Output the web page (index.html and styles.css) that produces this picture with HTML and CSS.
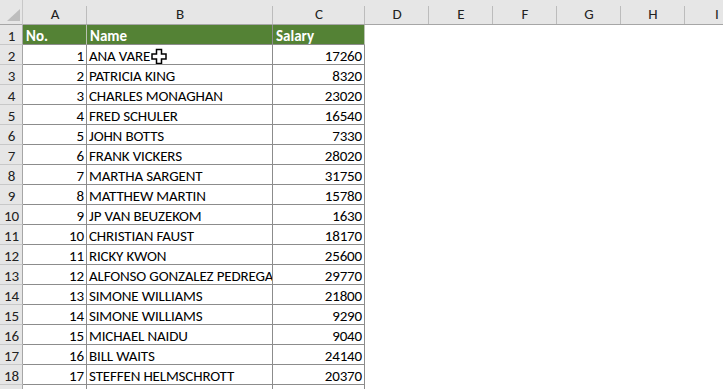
FILE: index.html
```html
<!DOCTYPE html>
<html>
<head>
<meta charset="utf-8">
<link rel="stylesheet" href="styles.css">
</head>
<body>
<div class="sheet">
  <div class="corner"><span class="tri"></span></div>
  <div class="colhead">A</div><div class="colhead">B</div><div class="colhead">C</div><div class="colhead">D</div><div class="colhead">E</div><div class="colhead">F</div><div class="colhead">G</div><div class="colhead">H</div><div class="colhead">I</div>

  <div class="rowhead">1</div><div class="th">No.</div><div class="th">Name</div><div class="th">Salary</div><div class="blank"></div><div class="blank"></div><div class="blank"></div><div class="blank"></div><div class="blank"></div><div class="blank"></div>

  <div class="rowhead">2</div><div class="td num">1</div><div class="td name">ANA VARE<svg class="cursor" width="17" height="17" viewBox="0 0 17 17"><path d="M5.5 1.5h5v4.5h4.5v5h-4.5v4.5h-5v-4.5h-4.5v-5h4.5z" fill="#fff" stroke="#000" stroke-width="1.5"/></svg></div><div class="td num">17260</div><div class="blank"></div><div class="blank"></div><div class="blank"></div><div class="blank"></div><div class="blank"></div><div class="blank"></div>
  <div class="rowhead">3</div><div class="td num">2</div><div class="td name">PATRICIA KING</div><div class="td num">8320</div><div class="blank"></div><div class="blank"></div><div class="blank"></div><div class="blank"></div><div class="blank"></div><div class="blank"></div>
  <div class="rowhead">4</div><div class="td num">3</div><div class="td name">CHARLES MONAGHAN</div><div class="td num">23020</div><div class="blank"></div><div class="blank"></div><div class="blank"></div><div class="blank"></div><div class="blank"></div><div class="blank"></div>
  <div class="rowhead">5</div><div class="td num">4</div><div class="td name">FRED SCHULER</div><div class="td num">16540</div><div class="blank"></div><div class="blank"></div><div class="blank"></div><div class="blank"></div><div class="blank"></div><div class="blank"></div>
  <div class="rowhead">6</div><div class="td num">5</div><div class="td name">JOHN BOTTS</div><div class="td num">7330</div><div class="blank"></div><div class="blank"></div><div class="blank"></div><div class="blank"></div><div class="blank"></div><div class="blank"></div>
  <div class="rowhead">7</div><div class="td num">6</div><div class="td name">FRANK VICKERS</div><div class="td num">28020</div><div class="blank"></div><div class="blank"></div><div class="blank"></div><div class="blank"></div><div class="blank"></div><div class="blank"></div>
  <div class="rowhead">8</div><div class="td num">7</div><div class="td name">MARTHA SARGENT</div><div class="td num">31750</div><div class="blank"></div><div class="blank"></div><div class="blank"></div><div class="blank"></div><div class="blank"></div><div class="blank"></div>
  <div class="rowhead">9</div><div class="td num">8</div><div class="td name">MATTHEW MARTIN</div><div class="td num">15780</div><div class="blank"></div><div class="blank"></div><div class="blank"></div><div class="blank"></div><div class="blank"></div><div class="blank"></div>
  <div class="rowhead">10</div><div class="td num">9</div><div class="td name">JP VAN BEUZEKOM</div><div class="td num">1630</div><div class="blank"></div><div class="blank"></div><div class="blank"></div><div class="blank"></div><div class="blank"></div><div class="blank"></div>
  <div class="rowhead">11</div><div class="td num">10</div><div class="td name">CHRISTIAN FAUST</div><div class="td num">18170</div><div class="blank"></div><div class="blank"></div><div class="blank"></div><div class="blank"></div><div class="blank"></div><div class="blank"></div>
  <div class="rowhead">12</div><div class="td num">11</div><div class="td name">RICKY KWON</div><div class="td num">25600</div><div class="blank"></div><div class="blank"></div><div class="blank"></div><div class="blank"></div><div class="blank"></div><div class="blank"></div>
  <div class="rowhead">13</div><div class="td num">12</div><div class="td name">ALFONSO GONZALEZ PEDREGA</div><div class="td num">29770</div><div class="blank"></div><div class="blank"></div><div class="blank"></div><div class="blank"></div><div class="blank"></div><div class="blank"></div>
  <div class="rowhead">14</div><div class="td num">13</div><div class="td name">SIMONE WILLIAMS</div><div class="td num">21800</div><div class="blank"></div><div class="blank"></div><div class="blank"></div><div class="blank"></div><div class="blank"></div><div class="blank"></div>
  <div class="rowhead">15</div><div class="td num">14</div><div class="td name">SIMONE WILLIAMS</div><div class="td num">9290</div><div class="blank"></div><div class="blank"></div><div class="blank"></div><div class="blank"></div><div class="blank"></div><div class="blank"></div>
  <div class="rowhead">16</div><div class="td num">15</div><div class="td name">MICHAEL NAIDU</div><div class="td num">9040</div><div class="blank"></div><div class="blank"></div><div class="blank"></div><div class="blank"></div><div class="blank"></div><div class="blank"></div>
  <div class="rowhead">17</div><div class="td num">16</div><div class="td name">BILL WAITS</div><div class="td num">24140</div><div class="blank"></div><div class="blank"></div><div class="blank"></div><div class="blank"></div><div class="blank"></div><div class="blank"></div>
  <div class="rowhead">18</div><div class="td num">17</div><div class="td name">STEFFEN HELMSCHROTT</div><div class="td num">20370</div><div class="blank"></div><div class="blank"></div><div class="blank"></div><div class="blank"></div><div class="blank"></div><div class="blank"></div>
  <div class="rowhead"></div><div class="td num"></div><div class="td name"></div><div class="td num"></div><div class="blank"></div><div class="blank"></div><div class="blank"></div><div class="blank"></div><div class="blank"></div><div class="blank"></div>
</div>
</body>
</html>
```

FILE: styles.css
```css
html, body {
  margin: 0;
  padding: 0;
  background: #fff;
  overflow: hidden;
  width: 723px;
  height: 389px;
}
.sheet {
  display: grid;
  grid-template-columns: 23px 64px 186px 92px 64px 64px 64px 64px 64px 64px;
  grid-template-rows: 25px repeat(19, 20px);
  font-family: Carlito, Lato, "Liberation Sans", sans-serif;
  font-size: 15px;
  color: #000;
  width: 749px;
}
.sheet > div {
  box-sizing: border-box;
  overflow: hidden;
  white-space: nowrap;
  line-height: 18px;
  padding-top: 2px;
}
.corner {
  background: #e6e6e6;
  border-bottom: 1px solid #a6a6a6;
  border-right: 1px solid #c8c8c8;
  display: flex;
  align-items: flex-end;
  justify-content: flex-end;
}
.sheet > .corner {
  padding: 0 2px 3px 0;
}
.tri {
  display: block;
  width: 13px;
  height: 12px;
  background: #bdbdbd;
  clip-path: polygon(100% 0, 100% 100%, 0 100%);
}
.colhead {
  background: #e6e6e6 linear-gradient(#bcbcbc, #bcbcbc) right 6px / 1px 19px no-repeat;
  border-bottom: 1px solid #a6a6a6;
  text-align: center;
  color: #222;
}
.sheet > .colhead {
  padding-top: 5px;
}
.rowhead {
  background: #e6e6e6;
  border-right: 1px solid #a6a6a6;
  border-bottom: 1px solid #c8c8c8;
  text-align: center;
  color: #222;
  padding-left: 1px;
}
.sheet > .th {
  background: #548235;
  color: #fff;
  font-weight: bold;
  padding: 2px 3px 0;
  border-right: 1px solid #b9c2b2;
  border-bottom: 1px solid #8c8c8c;
}
.sheet > .th:nth-child(13) {
  border-right-color: #8c8c8c;
}
.sheet > .td {
  border-right: 1px solid #8c8c8c;
  border-bottom: 1px solid #8c8c8c;
  padding: 2px 2px 0;
  letter-spacing: -0.15px;
}
.num {
  text-align: right;
}
.name {
  position: relative;
}
.cursor {
  position: absolute;
  left: 64px;
  top: 3px;
}
.blank {
  background: #fff;
}
```
